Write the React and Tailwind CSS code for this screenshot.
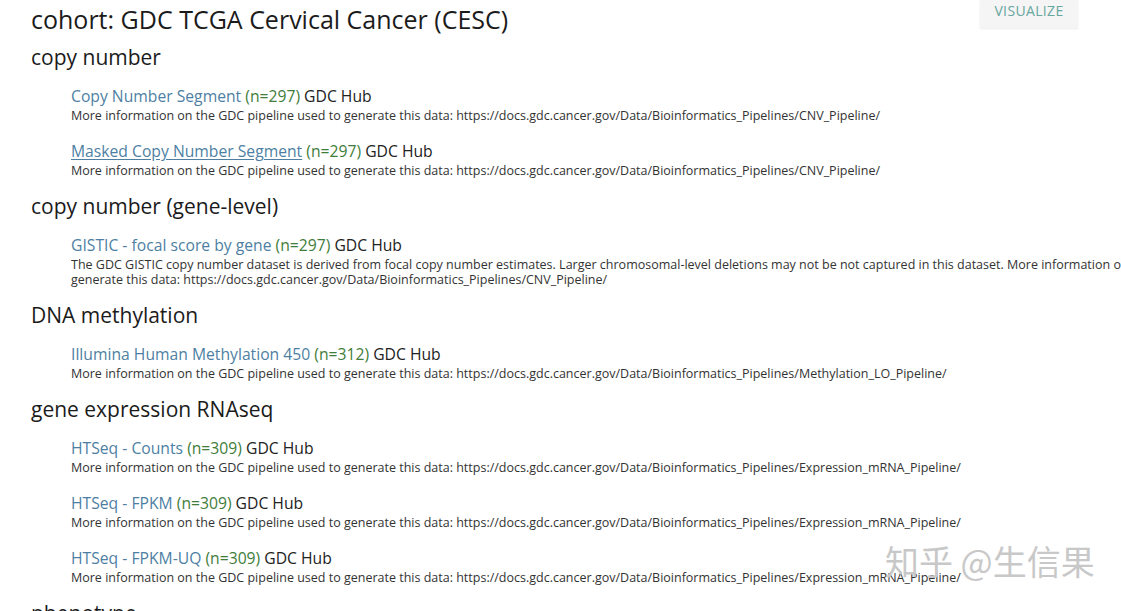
const gdcCnv = 'More information on the GDC pipeline used to generate this data: https://docs.gdc.cancer.gov/Data/Bioinformatics_Pipelines/CNV_Pipeline/';
const gdcMeth = 'More information on the GDC pipeline used to generate this data: https://docs.gdc.cancer.gov/Data/Bioinformatics_Pipelines/Methylation_LO_Pipeline/';
const gdcExpr = 'More information on the GDC pipeline used to generate this data: https://docs.gdc.cancer.gov/Data/Bioinformatics_Pipelines/Expression_mRNA_Pipeline/';

const sections = [
  {
    name: 'copy number',
    datasets: [
      { label: 'Copy Number Segment', n: 297, desc: [gdcCnv] },
      { label: 'Masked Copy Number Segment', n: 297, desc: [gdcCnv], hover: true },
    ],
  },
  {
    name: 'copy number (gene-level)',
    datasets: [
      {
        label: 'GISTIC - focal score by gene',
        n: 297,
        desc: [
          'The GDC GISTIC copy number dataset is derived from focal copy number estimates. Larger chromosomal-level deletions may not be not captured in this dataset. More information on the GDC pipeline used to',
          'generate this data: https://docs.gdc.cancer.gov/Data/Bioinformatics_Pipelines/CNV_Pipeline/',
        ],
      },
    ],
  },
  {
    name: 'DNA methylation',
    datasets: [{ label: 'Illumina Human Methylation 450', n: 312, desc: [gdcMeth] }],
  },
  {
    name: 'gene expression RNAseq',
    datasets: [
      { label: 'HTSeq - Counts', n: 309, desc: [gdcExpr] },
      { label: 'HTSeq - FPKM', n: 309, desc: [gdcExpr] },
      { label: 'HTSeq - FPKM-UQ', n: 309, desc: [gdcExpr] },
    ],
  },
  { name: 'phenotype', datasets: [] },
];

function Dataset({ d }) {
  return (
    <div>
      <div className="text-[15.7px] leading-[23px] text-[#222] whitespace-nowrap">
        <a className={`text-[#4e7fa3] ${d.hover ? 'underline underline-offset-2' : ''}`}>{d.label}</a>{' '}
        <span className="text-[#3f7d3a]">(n={d.n})</span> GDC Hub
      </div>
      <div className="text-[12.5px] leading-[15px] text-[#333] whitespace-nowrap">
        {d.desc.map((line, i) => (
          <div key={i}>{line}</div>
        ))}
      </div>
    </div>
  );
}

export default function App() {
  return (
    <div className="relative h-[611px] overflow-hidden bg-white font-['Open_Sans','Liberation_Sans',sans-serif]">
      <div className="flex items-start justify-between pl-[31px] pr-[43px]">
        <h1 className="pt-[3px] text-[25px] leading-[32px] text-[#1b1b1b]">cohort: GDC TCGA Cervical Cancer (CESC)</h1>
        <button className="flex h-[28px] w-[98px] items-start justify-center bg-[#f4f5f4] pt-[1px] text-[14px] leading-[20px] tracking-wide text-[#68a6a0] shadow-[0_1px_2px_rgba(0,0,0,0.08)]">
          VISUALIZE
        </button>
      </div>

      <div className="mt-[8px] flex flex-col gap-[14px] pl-[31px]">
        {sections.map(s => (
          <section key={s.name}>
            <h2 className="text-[21px] leading-[28px] text-[#1b1b1b]">{s.name}</h2>
            <div className="mt-[14px] flex flex-col gap-[17px] pl-[40px]">
              {s.datasets.map(d => (
                <Dataset key={d.label} d={d} />
              ))}
            </div>
          </section>
        ))}
      </div>

      <div className="pointer-events-none absolute left-[885px] top-[541px] text-[34px] leading-[40px] text-[#c8c8c8] whitespace-nowrap font-['Noto_Sans_CJK_SC',sans-serif]">
        知乎 @生信果
      </div>
    </div>
  );
}
